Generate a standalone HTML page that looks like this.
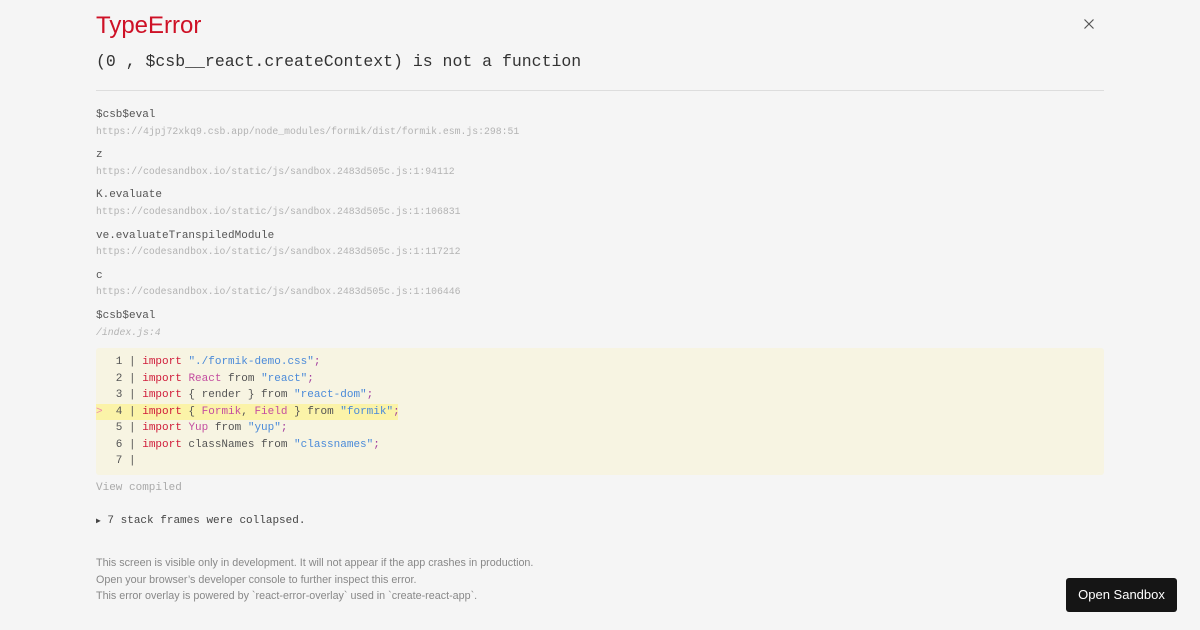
<!DOCTYPE html>
<html><head><meta charset="utf-8"><style>
body{margin:0;width:1200px;height:630px;background:#f5f5f5;position:relative;overflow:hidden;font-family:"Liberation Sans",sans-serif}
.a{position:absolute;white-space:pre}
.m{font-family:"Liberation Mono",monospace}
.n{font-size:11px;color:#555;line-height:14px}
.u{font-size:9.8px;color:#b3b3b3;line-height:13px}
.code{position:absolute;left:96px;top:348px;width:1008px;height:127px;background:#f7f4e2;border-radius:3px}
.l{position:absolute;left:0;width:1008px;height:16px;font-size:11px;line-height:16px;color:#555;font-family:"Liberation Mono",monospace;white-space:pre}
.k{color:#d01c3a}.s{color:#4a8ad9}.v{color:#c44ea0}.p{color:#a33e9e}
.f{font-size:10.75px;color:#888;line-height:14px}
</style></head><body>
<div class="a" style="left:96px;top:12px;font-size:24px;color:#ce1126">TypeError</div>
<svg class="a" style="left:1083px;top:18px" width="12" height="12" viewBox="0 0 12 12"><path d="M1.5 1.5L10.5 10.5M10.5 1.5L1.5 10.5" stroke="#555" stroke-width="1.2"/></svg>
<div class="a m" style="left:96px;top:52px;font-size:16.5px;color:#333">(0 , $csb__react.createContext) is not a function</div>
<div class="a" style="left:96px;top:90px;width:1008px;height:1px;background:#ddd"></div>

<div class="a m n" style="left:96px;top:108px">$csb$eval</div>
<div class="a m u" style="left:96px;top:125px">https://4jpj72xkq9.csb.app/node_modules/formik/dist/formik.esm.js:298:51</div>
<div class="a m n" style="left:96px;top:148px">z</div>
<div class="a m u" style="left:96px;top:165px">https://codesandbox.io/static/js/sandbox.2483d505c.js:1:94112</div>
<div class="a m n" style="left:96px;top:188px">K.evaluate</div>
<div class="a m u" style="left:96px;top:205px">https://codesandbox.io/static/js/sandbox.2483d505c.js:1:106831</div>
<div class="a m n" style="left:96px;top:229px">ve.evaluateTranspiledModule</div>
<div class="a m u" style="left:96px;top:245px">https://codesandbox.io/static/js/sandbox.2483d505c.js:1:117212</div>
<div class="a m n" style="left:96px;top:269px">c</div>
<div class="a m u" style="left:96px;top:285px">https://codesandbox.io/static/js/sandbox.2483d505c.js:1:106446</div>
<div class="a m n" style="left:96px;top:309px">$csb$eval</div>
<div class="a m u" style="left:96px;top:326px;font-style:italic">/index.js:4</div>

<div class="code">
<div class="l" style="top:6px">   1 | <span class="k">import</span> <span class="s">"./formik-demo.css"</span><span class="p">;</span></div>
<div class="l" style="top:22.5px">   2 | <span class="k">import</span> <span class="v">React</span> from <span class="s">"react"</span><span class="p">;</span></div>
<div class="l" style="top:39px">   3 | <span class="k">import</span> { render } from <span class="s">"react-dom"</span><span class="p">;</span></div>
<div class="l" style="top:55.5px;width:302px;background:#fbf3a8"><span style="color:#e8a">&gt;</span>  4 | <span class="k">import</span> { <span class="v">Formik</span>, <span class="v">Field</span> } from <span class="s">"formik"</span><span class="p">;</span></div>
<div class="l" style="top:72px">   5 | <span class="k">import</span> <span class="v">Yup</span> from <span class="s">"yup"</span><span class="p">;</span></div>
<div class="l" style="top:88.5px">   6 | <span class="k">import</span> classNames from <span class="s">"classnames"</span><span class="p">;</span></div>
<div class="l" style="top:105px">   7 |</div>
</div>

<div class="a m" style="left:96px;top:482px;font-size:11px;color:#aaa">View compiled</div>
<div class="a m" style="left:96px;top:515px;font-size:11px;color:#444"><span style="font-size:8px">▶</span> 7 stack frames were collapsed.</div>

<div class="a f" style="left:96px;top:556px">This screen is visible only in development. It will not appear if the app crashes in production.</div>
<div class="a f" style="left:96px;top:573px">Open your browser’s developer console to further inspect this error.</div>
<div class="a f" style="left:96px;top:589px">This error overlay is powered by `react-error-overlay` used in `create-react-app`.</div>

<div class="a" style="left:1066px;top:578px;width:111px;height:34px;background:#151515;border-radius:3px;color:#fff;font-size:13px;line-height:34px;text-align:center">Open Sandbox</div>
</body></html>
